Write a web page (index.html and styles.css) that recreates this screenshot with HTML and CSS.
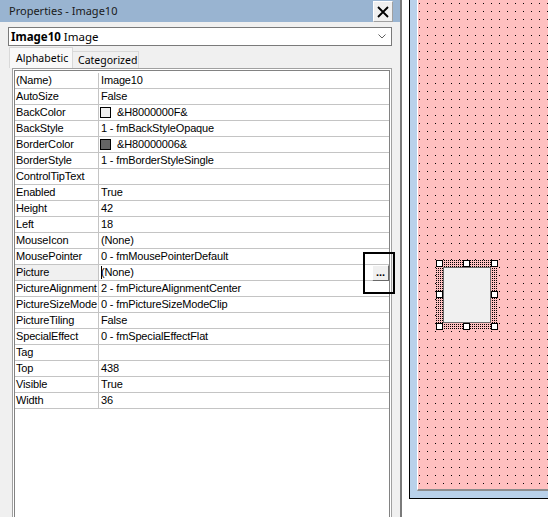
FILE: index.html
```html
<!DOCTYPE html>
<html lang="en">
<head>
    <meta charset="UTF-8">
    <title>Properties - Image10</title>
    <link rel="stylesheet" href="styles.css">
</head>
<body>
    <div class="props">
        <div class="titlebar">
            <span class="title">Properties - Image10</span>
            <div class="close">
                <svg width="12" height="12" viewBox="0 0 12 12"><path d="M1 1 L11 11 M11 1 L1 11" stroke="#000" stroke-width="1.8" fill="none"/></svg>
            </div>
        </div>

        <div class="combo">
            <b>Image10</b>&nbsp;Image
            <svg class="chev" width="8" height="5" viewBox="0 0 8 5"><path d="M0.5 0.5 L4 4 L7.5 0.5" stroke="#606060" fill="none"/></svg>
        </div>

        <div class="tabs">
            <div class="tab active">Alphabetic</div>
            <div class="tab">Categorized</div>
        </div>

        <div class="grid">
            <div class="grid-inner">
                <div class="row"><div class="name">(Name)</div><div class="value">Image10</div></div>
                <div class="row"><div class="name">AutoSize</div><div class="value">False</div></div>
                <div class="row"><div class="name">BackColor</div><div class="value"><span class="swatch light"></span>&amp;H8000000F&amp;</div></div>
                <div class="row"><div class="name">BackStyle</div><div class="value">1 - fmBackStyleOpaque</div></div>
                <div class="row"><div class="name">BorderColor</div><div class="value"><span class="swatch dark"></span>&amp;H80000006&amp;</div></div>
                <div class="row"><div class="name">BorderStyle</div><div class="value">1 - fmBorderStyleSingle</div></div>
                <div class="row"><div class="name">ControlTipText</div><div class="value"></div></div>
                <div class="row"><div class="name">Enabled</div><div class="value">True</div></div>
                <div class="row"><div class="name">Height</div><div class="value">42</div></div>
                <div class="row"><div class="name">Left</div><div class="value">18</div></div>
                <div class="row"><div class="name">MouseIcon</div><div class="value">(None)</div></div>
                <div class="row"><div class="name">MousePointer</div><div class="value">0 - fmMousePointerDefault</div></div>
                <div class="row selected"><div class="name">Picture</div><div class="value"><span class="caret"></span>(None)<span class="dots">...</span></div></div>
                <div class="row"><div class="name">PictureAlignment</div><div class="value">2 - fmPictureAlignmentCenter</div></div>
                <div class="row"><div class="name">PictureSizeMode</div><div class="value">0 - fmPictureSizeModeClip</div></div>
                <div class="row"><div class="name">PictureTiling</div><div class="value">False</div></div>
                <div class="row"><div class="name">SpecialEffect</div><div class="value">0 - fmSpecialEffectFlat</div></div>
                <div class="row"><div class="name">Tag</div><div class="value"></div></div>
                <div class="row"><div class="name">Top</div><div class="value">438</div></div>
                <div class="row"><div class="name">Visible</div><div class="value">True</div></div>
                <div class="row"><div class="name">Width</div><div class="value">36</div></div>
            </div>
        </div>

        <!-- highlight box drawn over the ... button -->
        <div class="callout"></div>
    </div>

    <div class="designer">
        <div class="canvas">
            <div class="selection">
                <div class="image-ctl"></div>
                <div class="handle h-tl"></div><div class="handle h-tm"></div><div class="handle h-tr"></div>
                <div class="handle h-ml"></div><div class="handle h-mr"></div>
                <div class="handle h-bl"></div><div class="handle h-bm"></div><div class="handle h-br"></div>
            </div>
        </div>
    </div>
</body>
</html>
```

FILE: styles.css
```css
* {
    box-sizing: border-box;
}

html, body {
    margin: 0;
}

body {
    width: 548px;
    height: 517px;
    overflow: hidden;
    background: #fff;
    display: flex;
    align-items: flex-start;
    font-family: "Liberation Sans", Arial, sans-serif;
    font-size: 11px;
    color: #000;
}

/* Properties window */
.props {
    position: relative;
    width: 402px;
    height: 540px;
    background: #f0f0f0;
    border-right: 2px solid #7a7a7a;
    display: flex;
    flex-direction: column;
}

.titlebar {
    height: 22px;
    background: #99b4d1;
    display: flex;
    align-items: flex-start;
    padding: 0 7px 0 9px;
}

.title {
    flex: 1;
    font-family: "Noto Sans", sans-serif;
    font-size: 11px;
    line-height: 21px;
    color: #1a1a1a;
}

.close {
    width: 20px;
    height: 21px;
    margin-top: 1px;
    background: #f0f0f0;
    border: 1px solid;
    border-color: #fff #a0a0a0 #a0a0a0 #fff;
    display: flex;
    align-items: center;
    justify-content: center;
}

.combo {
    margin: 5px 8px 0 8px;
    height: 19px;
    border: 1px solid #7a7a7a;
    background: #fff;
    display: flex;
    align-items: center;
    padding: 0 5px 0 2px;
    font-family: "Noto Sans", sans-serif;
    font-size: 11.5px;
}

.combo .chev {
    margin-left: auto;
}

/* Tab strip */
.tabs {
    display: flex;
    align-items: flex-end;
    height: 21px;
    margin: 1px 0 0 9px;
}

.tab {
    font-family: "Noto Sans", sans-serif;
    font-size: 10.5px;
    border: 1px solid #d9d9d9;
    border-bottom: none;
    background: #f0f0f0;
    white-space: nowrap;
}

.tab.active {
    width: 64px;
    height: 21px;
    line-height: 20px;
    padding-left: 6px;
    background: #f9f9f9;
}

.tab:not(.active) {
    width: 66px;
    height: 17px;
    line-height: 17px;
    padding-left: 5px;
    border-left: none;
}

/* Property grid */
.grid {
    margin: 0 8px 0 12px;
    flex: 1;
    border: 1px solid #a0a0a0;
    background: #fff;
    padding: 1px;
}

.grid-inner {
    height: 100%;
    border: 1px solid #828282;
    padding-top: 2px;
}

.row {
    display: flex;
    height: 16px;
    border-bottom: 1px solid #c4c4c4;
    line-height: 15px;
    letter-spacing: -0.15px;
}

.name {
    width: 84px;
    padding-left: 1px;
    border-right: 1px solid #c4c4c4;
    white-space: nowrap;
    overflow: hidden;
}

.value {
    flex: 1;
    display: flex;
    align-items: center;
    padding-left: 2px;
    white-space: nowrap;
}

.row.selected .name {
    background: #f0f0f0;
}

.swatch {
    width: 11px;
    height: 11px;
    margin: 0 6px 0 -1px;
    border: 1px solid #000;
}

.swatch.light { background: #f0f0f0; }
.swatch.dark { background: #646464; }

.caret {
    width: 1px;
    height: 13px;
    background: #000;
    margin-right: -1px;
}

.dots {
    margin-left: auto;
    width: 17px;
    height: 16px;
    background: #f0f0f0;
    border: 1px solid;
    border-color: #fff #696969 #696969 #fff;
    font-weight: bold;
    font-size: 11px;
    line-height: 12px;
    text-align: center;
    letter-spacing: 0;
}

.callout {
    position: absolute;
    left: 363px;
    top: 252px;
    width: 32px;
    height: 42px;
    border: 2px solid #000;
}

/* Form designer */
.designer {
    flex: 1;
    height: 499px;
    margin-left: 7px;
    background: #b9d1ea;
    border-left: 1px solid #000;
    border-bottom: 1px solid #000;
    padding: 0 0 7px 7px;
}

.canvas {
    position: relative;
    height: 100%;
    border-left: 1px solid #fff;
    border-bottom: 2px solid #8c8c8c;
    background-color: #ffc0c0;
    background-image:
        linear-gradient(to bottom, transparent 1px, #ffc0c0 1px),
        linear-gradient(to right, #000 1px, transparent 1px);
    background-size: 8px 8px;
    background-position: 1px 3px;
}

.selection {
    position: absolute;
    left: 18px;
    top: 260px;
    width: 62px;
    height: 70px;
    background-color: #ffc0c0;
    background-image:
        linear-gradient(to bottom, transparent 1px, #ffc0c0 1px),
        linear-gradient(to right, #000 1px, transparent 1px);
    background-size: 2px 2px;
}

.image-ctl {
    position: absolute;
    left: 7px;
    top: 7px;
    width: 48px;
    height: 56px;
    background: #f0f0f0;
    border: 1px solid #6d6d6d;
}

.handle {
    position: absolute;
    width: 7px;
    height: 7px;
    background: #fff;
    border: 1px solid #000;
}

.h-tl { left: 0; top: 0; }
.h-tm { left: 27px; top: 0; }
.h-tr { left: 55px; top: 0; }
.h-ml { left: 0; top: 31px; }
.h-mr { left: 55px; top: 31px; }
.h-bl { left: 0; top: 63px; }
.h-bm { left: 27px; top: 63px; }
.h-br { left: 55px; top: 63px; }
```
